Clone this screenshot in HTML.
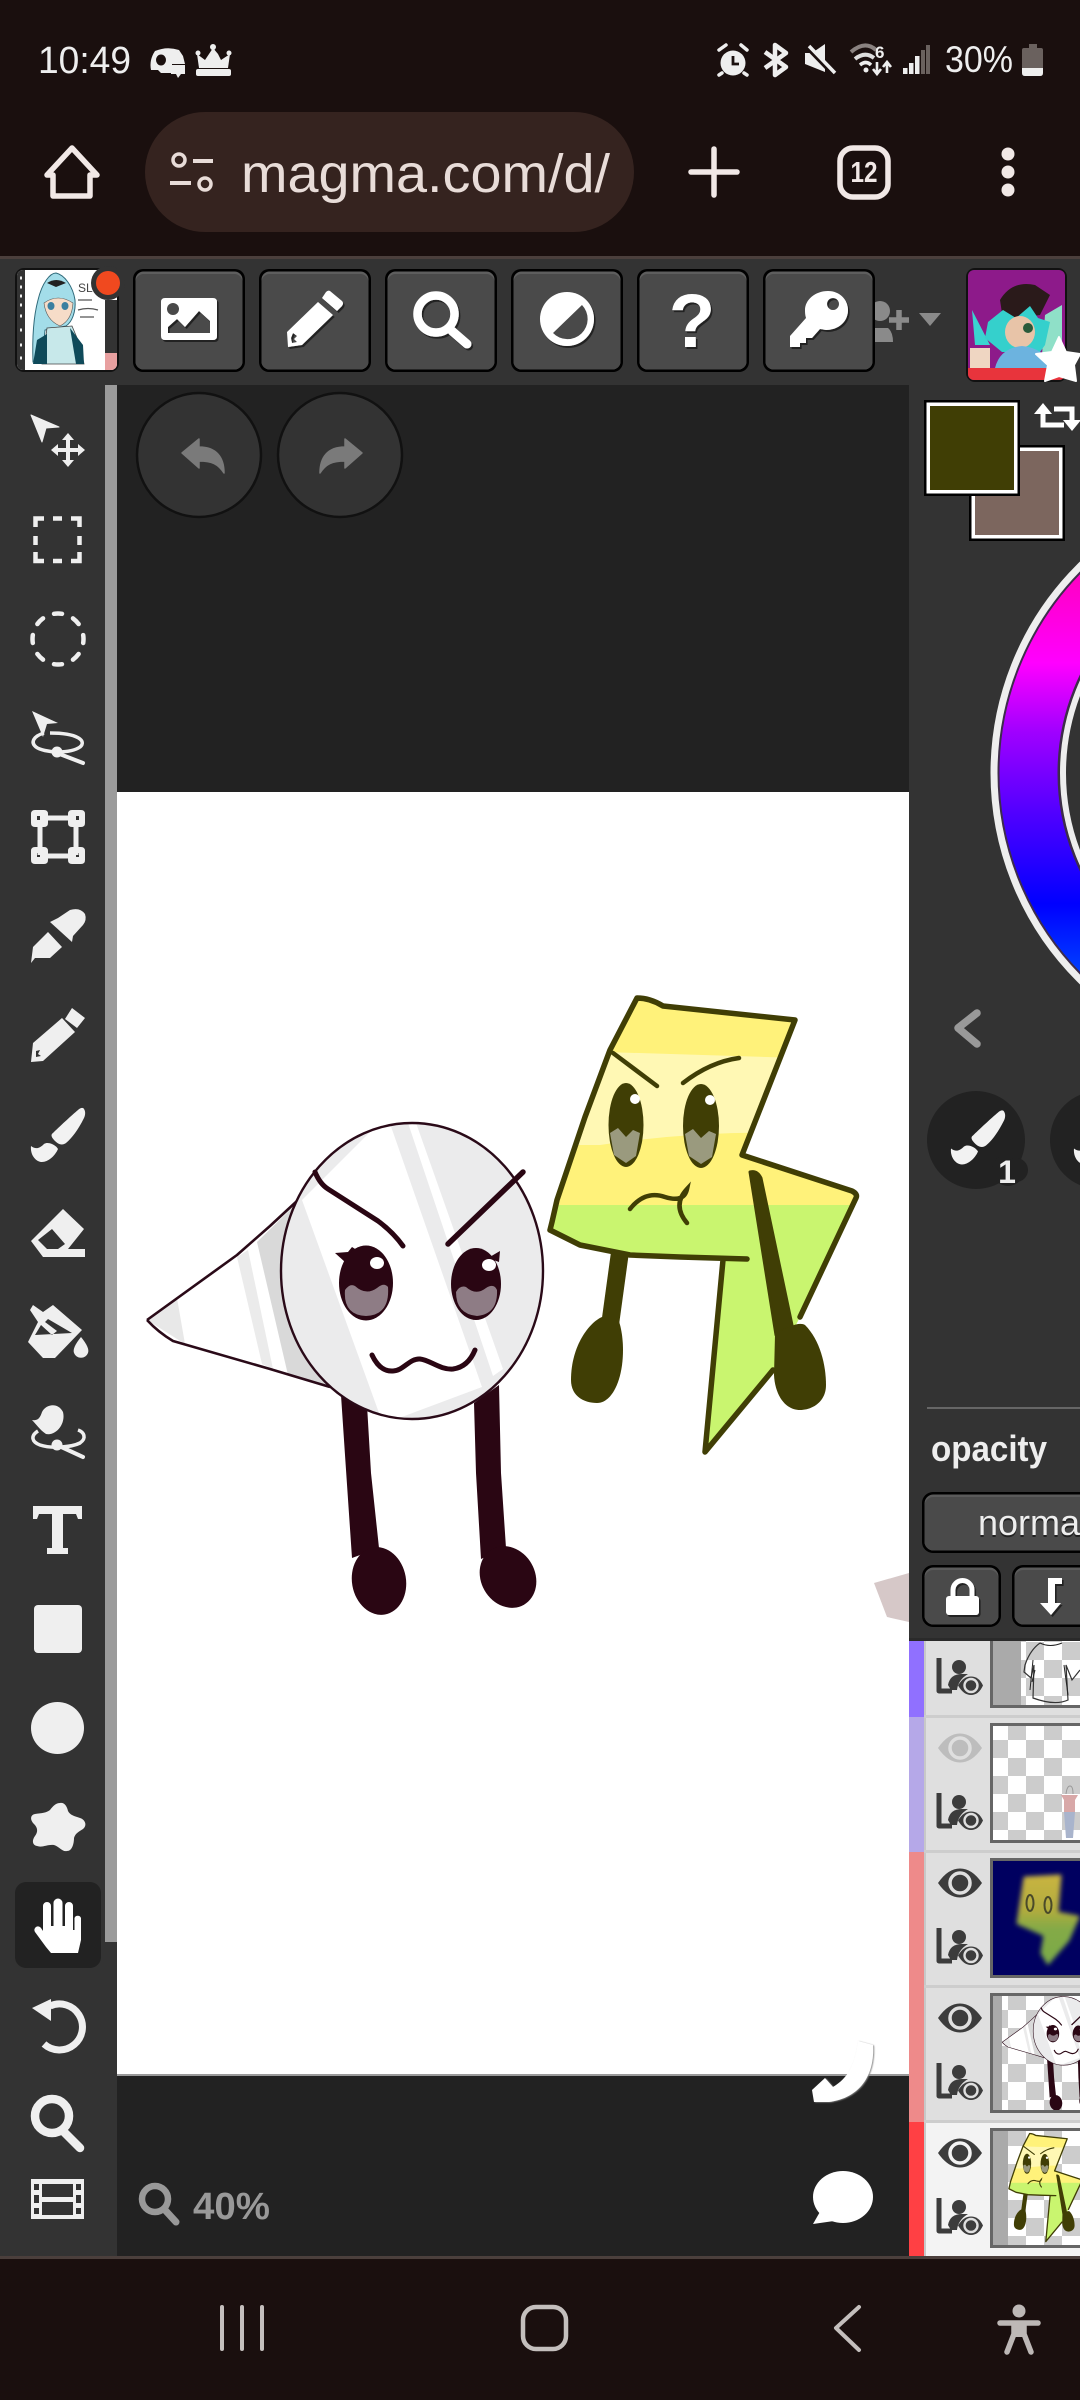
<!DOCTYPE html>
<html><head><meta charset="utf-8"><title>magma</title>
<style>html,body{margin:0;padding:0;background:#1a0f0e}svg{display:block}text{font-family:"Liberation Sans",sans-serif}</style></head>
<body>
<svg xmlns="http://www.w3.org/2000/svg" width="1080" height="2400" viewBox="0 0 1080 2400">
<defs>
<linearGradient id="hue" gradientUnits="userSpaceOnUse" x1="0" y1="560" x2="0" y2="990">
<stop offset="0" stop-color="#ff00b8"/><stop offset=".24" stop-color="#ff00ff"/><stop offset=".4" stop-color="#a000ff"/><stop offset=".59" stop-color="#5000ff"/><stop offset=".8" stop-color="#0000ff"/><stop offset="1" stop-color="#0050ff"/></linearGradient>
<linearGradient id="blobg" gradientUnits="userSpaceOnUse" x1="0" y1="1876" x2="0" y2="1963"><stop offset="0" stop-color="#c9b441"/><stop offset=".4" stop-color="#b0ab3e"/><stop offset=".6" stop-color="#84aa46"/><stop offset="1" stop-color="#7aaa48"/></linearGradient>
<pattern id="ck2" width="36" height="36" patternUnits="userSpaceOnUse" patternTransform="translate(1008 1722)"><rect width="36" height="36" fill="#fff"/><rect width="18" height="18" fill="#ccc"/><rect x="18" y="18" width="18" height="18" fill="#ccc"/></pattern>
<pattern id="ck1" width="36" height="36" patternUnits="userSpaceOnUse" patternTransform="translate(1044 1660)"><rect width="36" height="36" fill="#fff"/><rect width="18" height="18" fill="#ccc"/><rect x="18" y="18" width="18" height="18" fill="#ccc"/></pattern>
<pattern id="ck4" width="36" height="36" patternUnits="userSpaceOnUse" patternTransform="translate(1008 1992)"><rect width="36" height="36" fill="#fff"/><rect width="18" height="18" fill="#ccc"/><rect x="18" y="18" width="18" height="18" fill="#ccc"/></pattern>
<pattern id="ck5" width="36" height="36" patternUnits="userSpaceOnUse" patternTransform="translate(1008 2128)"><rect width="36" height="36" fill="#fff"/><rect width="18" height="18" fill="#ccc"/><rect x="18" y="18" width="18" height="18" fill="#ccc"/></pattern>
<clipPath id="headc"><ellipse cx="412" cy="1271" rx="131" ry="148"/></clipPath>
<clipPath id="conec"><path d="M147,1320 L237,1255 L270,1226 L297,1201 L330,1387 L270,1369 L173,1341Z"/></clipPath>
<clipPath id="yc"><path d="M637,998 L663,1006 L795,1020 L742,1155 L857,1193 L800,1317 L773,1370 L705,1452 L723,1258 L630,1255 L580,1245 L550,1230 L557,1200 L585,1117 L610,1050Z"/></clipPath>
<clipPath id="t1"><rect x="993" y="1641" width="87" height="64"/></clipPath>
<clipPath id="t2"><rect x="993" y="1726" width="87" height="114"/></clipPath>
<clipPath id="t3"><rect x="993" y="1861" width="87" height="114"/></clipPath>
<clipPath id="t4"><rect x="993" y="1996" width="87" height="114"/></clipPath>
<clipPath id="t5"><rect x="993" y="2131" width="87" height="114"/></clipPath>
<clipPath id="av"><rect x="968" y="270" width="97" height="110" rx="6"/></clipPath>
<clipPath id="tb"><rect x="17" y="270" width="100" height="100" rx="6"/></clipPath>
<filter id="sh" x="-10%" y="-10%" width="125%" height="125%"><feDropShadow dx="1.6" dy="2" stdDeviation=".3" flood-color="#222"/></filter>
<filter id="psh" x="-10%" y="-10%" width="125%" height="125%"><feDropShadow dx="1" dy="0.500" stdDeviation=".8" flood-color="#888"/></filter>
<filter id="bl" x="-20%" y="-20%" width="140%" height="140%"><feGaussianBlur stdDeviation="2.400"/></filter>

<g id="white">
 <path d="M341,1395 L367,1405 L371,1473 L379,1548 L352,1558 L345,1455Z" fill="#2a0613"/>
 <ellipse cx="379" cy="1581" rx="27" ry="34" transform="rotate(-10 379 1581)" fill="#2a0613"/>
 <path d="M474,1403 L499,1385 L501,1473 L506,1548 L481,1559 L476,1473Z" fill="#2a0613"/>
 <ellipse cx="508" cy="1577" rx="27" ry="32" transform="rotate(-30 508 1577)" fill="#2a0613"/>
 <path d="M147,1320 L237,1255 L270,1226 L297,1201 L330,1387 L270,1369 L173,1341Z" fill="#fff"/>
 <g clip-path="url(#conec)">
  <path d="M147,1320 L177,1298 L185,1344Z" fill="#e8e8e8"/>
  <path d="M237,1257 L248,1250 L273,1369 L262,1364Z" fill="#ebebeb"/>
  <path d="M257,1242 L297,1203 L330,1386 L288,1375Z" fill="#d9d9d9"/>
 </g>
 <path d="M147,1320 L237,1255 L270,1226 L297,1201 M147,1320 Q158,1332 173,1341 L270,1369 L330,1387" fill="none" stroke="#2a0a18" stroke-width="2.600" stroke-linejoin="round"/>
 <ellipse cx="412" cy="1271" rx="131" ry="148" fill="#ebebec"/>
 <g clip-path="url(#headc)">
  <path d="M302,1200 L387,1115 L482,1387 L383,1424Z" fill="#fff"/>
  <path d="M407,1120 L415,1120 L503,1369 L493,1376Z" fill="#fff"/>
 </g>
 <ellipse cx="412" cy="1271" rx="131" ry="148" fill="none" stroke="#2a0a18" stroke-width="2.400"/>
 <path d="M315,1172 Q320,1184 328,1189 L378,1221 Q393,1232 403,1246" fill="none" stroke="#2a0613" stroke-width="5" stroke-linecap="round"/>
 <path d="M523,1172 L448,1244" fill="none" stroke="#2a0613" stroke-width="5.500" stroke-linecap="round"/>
 <path d="M335,1253 L348,1252 L352,1247 L360,1252 L345,1262Z" fill="#2a0613"/>
 <ellipse cx="366" cy="1283" rx="27" ry="37.500" fill="#2a0613"/>
 <path d="M345,1290 Q350,1283 355,1286 Q366,1296 377,1288 Q384,1282 388,1287 Q390,1315 366,1316 Q343,1315 345,1290Z" fill="#8e7c85"/>
 <ellipse cx="377" cy="1263" rx="7" ry="6" fill="#fff"/>
 <path d="M500,1251 L499,1262 L488,1258Z" fill="#2a0613"/>
 <ellipse cx="476" cy="1284" rx="25" ry="36" fill="#2a0613"/>
 <path d="M456,1292 Q460,1285 466,1287 Q476,1296 486,1288 Q494,1283 497,1290 Q498,1314 477,1316 Q456,1314 456,1292Z" fill="#8e7c85"/>
 <ellipse cx="489" cy="1265" rx="7" ry="6" fill="#fff"/>
 <path d="M372,1355 Q380,1372 393,1371 C403,1371 410,1358 420,1359 C430,1360 440,1370 453,1369 Q468,1367 475,1350" fill="none" stroke="#2a0613" stroke-width="5" stroke-linecap="round"/>
</g>

<g id="yellow">
 <path d="M611,1252 L629,1252 L619,1325 L601,1325Z" fill="#403e05"/>
 <path d="M602,1317 C590,1322 571,1345 571,1380 C571,1397 585,1403 597,1403 C612,1403 623,1380 623,1350 C623,1335 620,1322 617,1317Z" fill="#403e05"/>
 <path d="M637,998 L663,1006 L795,1020 L742,1155 L857,1193 L800,1317 L773,1370 L705,1452 L723,1258 L630,1255 L580,1245 L550,1230 L557,1200 L585,1117 L610,1050Z" fill="#c9f56f"/>
 <g clip-path="url(#yc)">
  <rect x="540" y="990" width="330" height="215" fill="#fff27a"/>
  <path d="M540,1050 L800,1058 L800,1133 Q700,1130 600,1145 L540,1145Z" fill="#fff8b4"/>
 </g>
 <path d="M747,1259 L680,1257 L630,1255 L580,1245 L550,1230 L552,1222 L557,1200 L585,1117 L610,1050 L637,998 Q650,998 663,1006 L795,1020 L742,1155 L852,1191 Q858,1194 856,1198 L800,1317 M773,1370 L705,1452 L723,1260" fill="none" stroke="#403e05" stroke-width="5.500" stroke-linejoin="round" stroke-linecap="round"/>
 <ellipse cx="626" cy="1125" rx="17.500" ry="42" fill="#403e05"/>
 <path d="M610,1133 L618,1128 L626,1137 L633,1130 L640,1133 L636,1156 L626,1163 L614,1155Z" fill="#9a9a7e"/>
 <circle cx="635" cy="1099" r="5" fill="#fff"/>
 <ellipse cx="701" cy="1126" rx="18" ry="42" fill="#403e05"/>
 <path d="M685,1134 L693,1129 L701,1138 L709,1131 L716,1134 L712,1157 L701,1164 L689,1156Z" fill="#9a9a7e"/>
 <circle cx="710" cy="1100" r="5" fill="#fff"/>
 <path d="M613,1053 L657,1086 M683,1083 Q710,1062 739,1058" fill="none" stroke="#403e05" stroke-width="4.500" stroke-linecap="round"/>
 <path d="M630,1209 Q645,1190 665,1197 Q684,1203 687,1189 Q672,1205 687,1223" fill="none" stroke="#403e05" stroke-width="4.500" stroke-linecap="round"/>
 <path d="M750,1172 Q757,1170 761,1178 L792,1325 L776,1335Z" fill="#403e05" stroke="#403e05" stroke-width="3" stroke-linejoin="round"/>
 <path d="M775,1335 C790,1325 800,1322 805,1325 C820,1340 826,1365 826,1385 C826,1402 812,1410 800,1410 C785,1410 775,1395 774,1375Z" fill="#403e05"/>
</g>

<g id="merge">
 <path d="M939,1658 V1691 H952" fill="none" stroke="#3c3c3c" stroke-width="5" stroke-linejoin="round"/>
 <circle cx="959" cy="1667" r="7" fill="#3c3c3c"/>
 <path d="M948,1685 Q950,1674 962,1674 L968,1674 Q958,1680 957,1690 L951,1690Z" fill="#3c3c3c"/>
 <path d="M958,1685.500 C962,1679 966,1676.500 971,1676.500 C976,1676.500 980,1679 983,1685.500 C980,1692 976,1695 971,1695 C966,1695 962,1692 958,1685.500Z" fill="#3c3c3c"/>
 <circle cx="971" cy="1685.500" r="6.500" fill="none" stroke="#dfdfdf" stroke-width="2.400"/>
</g>
<path id="eyeshape" d="M0,0" fill="none"/>
<g id="brush" fill="#f2f2f2">
 <path d="M84,1109 C86,1112 85,1116 84,1118 C78,1130 72,1138 66,1143 C62,1146 58,1144 55,1141 C52,1138 50,1135 53,1133 C58,1128 72,1115 78,1110 C80,1108 83,1107 84,1109Z"/>
 <path d="M31,1146 C36,1150 40,1148 44,1144 C48,1141 56,1145 58,1149 C55,1156 48,1162 42,1162 C36,1162 30,1155 31,1146Z"/>
</g>
</defs>

<rect width="1080" height="2400" fill="#1a0f0e"/>

<!-- status bar -->
<text x="38" y="73" font-size="38" fill="#eee" textLength="93" lengthAdjust="spacingAndGlyphs">10:49</text>
<path d="M155,51 Q167,46 179,50 L183,56 L185,64 H172 V73 H166 L161,73 L158,70 L151,70 Q149,60 155,51Z" fill="#eee"/>
<ellipse cx="161" cy="60" rx="5" ry="5.500" fill="#1a0f0e"/>
<path d="M171,65 H185 V74 H181 L178,78 L176,74 H171Z" fill="#eee"/>
<path d="M197,54 L205,60 L209,54 L213,48 L218,54 L221,60 L230,54 L228,68 H199Z" fill="#eee"/>
<circle cx="213" cy="47" r="3" fill="#eee"/><circle cx="198" cy="53" r="2.500" fill="#eee"/><circle cx="229" cy="53" r="2.500" fill="#eee"/>
<rect x="196" y="69" width="35" height="7" rx="2" fill="#eee"/>
<text x="945" y="72" font-size="37" fill="#eee" textLength="68" lengthAdjust="spacingAndGlyphs">30%</text>
<g fill="#eee" stroke="none">
 <circle cx="733" cy="63" r="12.500"/>
 <path d="M719,50 L726,45 M741,45 L747,50" stroke="#eee" stroke-width="3.500" fill="none" stroke-linecap="round"/>
 <path d="M722,73 L719,75 M744,73 L747,75" stroke="#eee" stroke-width="3.500" fill="none" stroke-linecap="round"/>
 <path d="M733,56 V64 H739" stroke="#1a0f0e" stroke-width="2.800" fill="none"/>
</g>
<path d="M765,52 L786,67 L775,75 V45 L786,53 L765,68" fill="none" stroke="#eee" stroke-width="4.500" stroke-linejoin="round"/>
<path d="M805,53 H812 L825,44 V72 L805,64Z" fill="#eee"/>
<path d="M805,45 L833,74" stroke="#1a0f0e" stroke-width="4.500"/><path d="M809,46 L835,73" stroke="#eee" stroke-width="3.500"/>
<path d="M851,52 Q865,40 876,50" fill="none" stroke="#8a8280" stroke-width="4"/>
<path d="M855,59 Q865,51 874,58" fill="none" stroke="#ddd" stroke-width="4"/>
<path d="M860,65 Q866,60 871,65" fill="none" stroke="#eee" stroke-width="3.500"/>
<circle cx="866" cy="70" r="2.500" fill="#eee"/>
<text x="875" y="58" font-size="17" fill="#eee" font-weight="bold">6</text>
<path d="M877,62 V73 M873,69 L877,74 L881,69 M887,73 V63 M883,67 L887,62 L891,67" fill="none" stroke="#eee" stroke-width="2.600"/>
<g fill="#eee"><rect x="903" y="68" width="4.500" height="6"/><rect x="909" y="63" width="4.500" height="11"/><rect x="915" y="56" width="4.500" height="18"/></g>
<g fill="#6a615e"><rect x="921" y="50" width="4" height="24"/><rect x="926" y="45" width="4" height="29"/></g>
<path d="M1029,44 H1037 V48 H1041 Q1043,48 1043,50 V68 H1022 V50 Q1022,48 1024,48 H1029Z" fill="#6a615e"/>
<path d="M1022,68 H1043 V73 Q1043,76 1040,76 H1025 Q1022,76 1022,73Z" fill="#eee"/>

<!-- browser bar -->
<path d="M72,148 L97,175 H90 V196 H53 V175 H47Z" fill="none" stroke="#f1e8e6" stroke-width="5.500" stroke-linejoin="round"/>
<rect x="145" y="112" width="489" height="120" rx="60" fill="#35231f"/>
<circle cx="179" cy="160" r="6" fill="none" stroke="#e8dcd8" stroke-width="3.500"/>
<path d="M193,161 H213 M170,183 H191" stroke="#e8dcd8" stroke-width="4"/>
<circle cx="205" cy="184" r="6" fill="none" stroke="#e8dcd8" stroke-width="3.500"/>
<text x="241" y="192" font-size="54" fill="#e8dcd8" textLength="369" lengthAdjust="spacingAndGlyphs">magma.com/d/</text>
<path d="M714,149 V195 M691,172 H737" stroke="#f1e8e6" stroke-width="5.500" stroke-linecap="round"/>
<rect x="840" y="148" width="48" height="49" rx="13" fill="none" stroke="#f1e8e6" stroke-width="5.500"/>
<text x="864" y="182" font-size="29" font-weight="bold" fill="#f1e8e6" text-anchor="middle" textLength="27" lengthAdjust="spacingAndGlyphs">12</text>
<g fill="#f1e8e6"><circle cx="1008" cy="154" r="6.500"/><circle cx="1008" cy="172" r="6.500"/><circle cx="1008" cy="190" r="6.500"/></g>

<!-- app bg -->
<rect x="0" y="256" width="1080" height="3" fill="#4b3f3c"/>
<rect x="0" y="259" width="1080" height="1997" fill="#333"/>
<rect x="117" y="385" width="792" height="1871" fill="#222"/>
<rect x="117" y="792" width="792" height="1283" fill="#fff"/>
<rect x="117" y="2074" width="792" height="2" fill="#999"/>
<rect x="105" y="385" width="12" height="1557" fill="#9b9b9b"/>
<rect x="0" y="2256" width="1080" height="3" fill="#4b3f3c"/>

<!-- art -->
<path d="M874,1583 L909,1573 V1622 L887,1617Z" fill="#d6c8c8"/>
<use href="#white"/>
<use href="#yellow"/>

<!-- person add behind toolbar -->
<circle cx="880" cy="311" r="10" fill="#8a8a8a"/>
<path d="M872,328 H888 Q893,332 893,342 H872Z" fill="#8a8a8a"/>
<path d="M899,310 V330 M889,320 H909" stroke="#8a8a8a" stroke-width="5.500"/>
<path d="M919,313 H941 L930,326Z" fill="#8a8a8a"/>

<!-- top toolbar -->
<g>
 <rect x="133" y="269" width="112" height="103" rx="10" fill="#000"/><rect x="135.500" y="271.500" width="107" height="98" rx="8" fill="#5e5e5e"/><rect x="135.500" y="274" width="107" height="95.500" rx="8" fill="#4a4a4a"/>
 <rect x="259" y="269" width="112" height="103" rx="10" fill="#000"/><rect x="261.500" y="271.500" width="107" height="98" rx="8" fill="#5e5e5e"/><rect x="261.500" y="274" width="107" height="95.500" rx="8" fill="#4a4a4a"/>
 <rect x="385" y="269" width="112" height="103" rx="10" fill="#000"/><rect x="387.500" y="271.500" width="107" height="98" rx="8" fill="#5e5e5e"/><rect x="387.500" y="274" width="107" height="95.500" rx="8" fill="#4a4a4a"/>
 <rect x="511" y="269" width="112" height="103" rx="10" fill="#000"/><rect x="513.500" y="271.500" width="107" height="98" rx="8" fill="#5e5e5e"/><rect x="513.500" y="274" width="107" height="95.500" rx="8" fill="#4a4a4a"/>
 <rect x="637" y="269" width="112" height="103" rx="10" fill="#000"/><rect x="639.500" y="271.500" width="107" height="98" rx="8" fill="#5e5e5e"/><rect x="639.500" y="274" width="107" height="95.500" rx="8" fill="#4a4a4a"/>
 <rect x="763" y="269" width="112" height="103" rx="10" fill="#000"/><rect x="765.500" y="271.500" width="107" height="98" rx="8" fill="#5e5e5e"/><rect x="765.500" y="274" width="107" height="95.500" rx="8" fill="#4a4a4a"/>
 <g filter="url(#sh)">
  <path fill-rule="evenodd" fill="#fff" d="M165,298 H213 Q217,298 217,302 V336 Q217,340 213,340 H165 Q161,340 161,336 V302 Q161,298 165,298Z M168,333 H210 V321 L199,311 L185,327 L177,319 L168,327Z"/>
  <circle cx="173" cy="309" r="6" fill="#4a4a4a"/>
  <path fill="#fff" d="M330,291 L342,301 Q344,303 342,306 L337,311 L322,298 L326,292 Q328,290 330,291Z"/>
  <path fill="#fff" fill-rule="evenodd" d="M318,302 L333,315 L302,345 L288,347 L287,332Z M291,338 L292,343 L297,342 L294,339 L297,336 L293,333Z"/>
  <path d="M452,331 L467,344" stroke="#fff" stroke-width="9" stroke-linecap="round"/>
  <circle cx="436" cy="314" r="18.500" fill="none" stroke="#fff" stroke-width="8.500"/>
  <circle cx="567" cy="319" r="27" fill="#fff"/>
  <path d="M553,333 L582,305 A20,20 0 0 1 553,333Z" fill="#4a4a4a"/>
  <text x="692" y="347" font-size="76" font-weight="bold" fill="#fff" text-anchor="middle">?</text>
  <path fill="#fff" fill-rule="evenodd" d="M828,291 C840,291 848,300 848,310 C848,322 838,330 826,330 L820,329 L812,338 H806 V343 H800 V347 H790 V336 L806,318 C805,315 805,312 805,310 C805,300 815,291 828,291Z M833,298 a6,6 0 1 0 .01,0Z"/>
 </g>
</g>

<!-- doc thumb -->
<rect x="15" y="268" width="104" height="104" rx="9" fill="#111"/>
<g clip-path="url(#tb)">
 <rect x="17" y="270" width="100" height="100" fill="#fff"/>
 <rect x="17" y="270" width="8" height="100" fill="#333"/>
 <path d="M20,278 h2 M20,287 h2 M20,296 h2 M20,305 h2 M20,316 h2 M20,330 h2 M20,345 h2 M20,358 h2" stroke="#eee" stroke-width="3"/>
 <rect x="105" y="300" width="14" height="55" fill="#333"/>
 <path d="M105,353 h14 v18 h-14Z" fill="#e8a0a0"/>
 <path d="M33,362 C32,335 34,315 38,300 C42,283 50,273 56,273 C65,275 73,287 75,300 C76,312 72,322 66,326 L45,330 L42,362Z" fill="#a3dde9" stroke="#2f6a7a" stroke-width="1"/>
 <path d="M44,303 Q58,293 73,303 Q72,320 60,326 Q46,320 44,303Z" fill="#f6dcc8" stroke="#555" stroke-width=".6"/>
 <path d="M47,328 L72,326 L80,345 L84,364 L42,364Z" fill="#c7e8ea" stroke="#444" stroke-width=".8"/>
 <path d="M37,340 L47,334 L47,364 L33,364Z M70,328 L83,345 L84,364 L76,364 Z" fill="#0f4a5a"/>
 <ellipse cx="51" cy="306" rx="3.500" ry="4" fill="#3b7fa0"/><ellipse cx="65" cy="306" rx="3.500" ry="4" fill="#3b7fa0"/>
 <path d="M47,283 Q56,277 66,283 L56,287Z" fill="#222"/>
 <text x="78" y="292" font-size="12" fill="#444">SL</text>
 <path d="M78,300 h14 M78,310 q10,-3 20,0 M80,317 h14" stroke="#555" stroke-width="1.200" fill="none"/>
</g>
<circle cx="108" cy="283" r="17" fill="#333"/>
<circle cx="108" cy="283" r="12" fill="#f0491f"/>

<!-- avatar -->
<rect x="966" y="268" width="101" height="114" rx="9" fill="#111"/>
<g clip-path="url(#av)">
 <rect x="968" y="270" width="97" height="110" fill="#8d1a8a"/>
 <path d="M1000,300 Q1012,280 1035,285 L1050,295 L1040,315 L1003,320Z" fill="#2a1a1a"/>
 <path d="M972,310 L990,345 L975,345Z" fill="#3ad4d0"/>
 <path d="M1045,315 L1062,305 L1062,365 L1042,355Z" fill="#8fe0c8"/>
 <path d="M988,322 L1003,310 L1016,318 L1030,306 L1038,318 L1050,322 L1045,345 L1040,352 L1002,352 L985,338Z" fill="#35d0cc"/>
 <ellipse cx="1020" cy="332" rx="15" ry="16" fill="#e8c4a8"/>
 <circle cx="1028" cy="328" r="5" fill="#2a5a3a"/>
 <path d="M995,368 Q1000,348 1022,346 Q1045,348 1052,368Z" fill="#6cb3df"/>
 <path d="M970,348 h20 v20 h-20Z" fill="#efd6c2"/>
 <rect x="968" y="368" width="97" height="12" fill="#e8343c"/>
</g>
<path d="M1059,337 L1066,352 L1080,354 L1074,365 L1076,381 L1059,376 L1045,381 L1048,365 L1036,354 L1052,352Z" fill="#fff" stroke="#fff" stroke-width="2" stroke-linejoin="round"/>

<!-- undo/redo -->
<circle cx="199" cy="455" r="62" fill="#333" stroke="#111" stroke-width="2.500"/>
<circle cx="340" cy="455" r="62" fill="#333" stroke="#111" stroke-width="2.500"/>
<path d="M182,453 L199,439 V447 C216,447 224,457 224,473 C218,464 212,461 199,461 V468Z" fill="#7a7a7a" stroke="#7a7a7a" stroke-width="1.500" stroke-linejoin="round"/>
<path d="M362,453 L345,439 V447 C328,447 320,457 320,473 C326,464 332,461 345,461 V468Z" fill="#7a7a7a" stroke="#7a7a7a" stroke-width="1.500" stroke-linejoin="round"/>

<!-- left tools -->
<g fill="#efefef">
 <path d="M31,415 L59,427 L46,428 L42,442Z" stroke="#efefef" stroke-width="1" stroke-linejoin="round"/>
 <path d="M68,433 l6,7 h-4 v8 h8 v-4 l7,6 -7,6 v-4 h-8 v8 h4 l-6,7 -6,-7 h4 v-8 h-8 v4 l-7,-6 7,-6 v4 h8 v-8 h-4z"/>
 <g fill="none" stroke="#efefef" stroke-width="4.500">
  <path d="M35.500,527 V518.500 H44 M71,518.500 H79.500 V527 M79.500,552 V561 H71 M44,561 H35.500 V552 M53,518.500 H62 M53,561 H62 M35.500,536 V545 M79.500,536 V545"/>
  <circle cx="58" cy="639" r="25.500" stroke-dasharray="8 12" stroke-dashoffset="4" stroke-linecap="round" stroke-width="4.500"/>
  <path d="M44,733 C34,736 30,742 36,747 C44,753 70,754 80,747 C87,741 78,733 50,733" stroke-width="3.500"/>
  <path d="M57,753 L83,763" stroke-width="4" stroke-linecap="round"/>
  <path d="M40,820 V855 M76,820 V855 M40,818 H76 M40,856 H76" stroke-width="5"/>
 </g>
 <path d="M32,711 L58,723 L47,724 L43,737Z"/>
 <circle cx="57" cy="752" r="5.500"/>
 <path fill-rule="evenodd" d="M35,810 h9 q4,0 4,4 v9 q0,4 -4,4 h-9 q-4,0 -4,-4 v-9 q0,-4 4,-4Z M37,816 v4 h5 v-4Z"/>
 <path fill-rule="evenodd" d="M72,810 h9 q4,0 4,4 v9 q0,4 -4,4 h-9 q-4,0 -4,-4 v-9 q0,-4 4,-4Z M74,816 v4 h5 v-4Z"/>
 <path fill-rule="evenodd" d="M35,847 h9 q4,0 4,4 v9 q0,4 -4,4 h-9 q-4,0 -4,-4 v-9 q0,-4 4,-4Z M37,853 v4 h5 v-4Z"/>
 <path fill-rule="evenodd" d="M72,847 h9 q4,0 4,4 v9 q0,4 -4,4 h-9 q-4,0 -4,-4 v-9 q0,-4 4,-4Z M74,853 v4 h5 v-4Z"/>
 <path d="M50,922 L58,918 L70,910 Q80,907 85,914 Q87,920 83,925 L73,936 L72,942Z"/>
 <path d="M48,932 L62,947 L50,958 L35,958 L31,963 L33,947Z"/>
 <path d="M72,1008 L85,1018 L77,1028 L65,1019Z"/>
 <path fill-rule="evenodd" d="M62,1018 L75,1032 L43,1061 L31,1062 L33,1043Z M36,1051 L36,1057 L41,1056 L38,1054 L40,1050Z"/>
 <use href="#brush"/>
 <path fill-rule="evenodd" d="M63,1209 L84,1229 L68,1249 H85 V1257 H43 L31,1241Z M52,1229 L38,1240 L47,1249 H58 L65,1244Z"/>
 <path fill-rule="evenodd" d="M33,1305 L43,1312 L53,1305 L82,1330 L55,1358 H43 L28,1342 L38,1322 L30,1310Z M35,1335 L72,1333 L48,1319 L45,1322 L57,1331 L52,1335 L41,1325Z"/>
 <path d="M81,1337 Q90,1348 88,1353 A7.500,7.500 0 0 1 74,1353 Q72,1348 81,1337Z"/>
 <path d="M32,1420 C38,1421 40,1418 42,1412 C46,1404 58,1402 63,1412 C66,1424 56,1436 46,1434 C40,1430 36,1424 32,1420Z"/>
 <g fill="none" stroke="#efefef" stroke-width="3.500"><path d="M38,1431 C30,1436 32,1442 40,1445 C52,1449 72,1447 80,1443 C87,1438 84,1432 78,1430"/><path d="M57,1445 L83,1457" stroke-width="4" stroke-linecap="round"/></g>
 <circle cx="57" cy="1445" r="5.500"/>
 <path d="M33,1506 H82 V1519 H78 L76,1514 H63 V1548 H68 V1554 H47 V1548 H52 V1514 H39 L37,1519 H33Z"/>
 <rect x="34" y="1605" width="48" height="48" rx="4"/>
 <ellipse cx="57.500" cy="1728" rx="26.500" ry="26"/>
 <path d="M60,1803 C64,1802 67,1806 68,1811 C70,1815 74,1816 80,1818 C86,1820 87,1826 83,1829 C78,1832 75,1834 74,1838 C74,1844 72,1851 67,1851 C62,1852 60,1847 54,1845 C48,1844 42,1848 37,1846 C32,1845 32,1840 35,1836 C38,1832 38,1828 34,1824 C30,1820 30,1815 35,1814 C42,1813 46,1813 50,1810 C53,1806 56,1803 60,1803Z"/>
</g>
<rect x="15" y="1882" width="86" height="86" rx="11" fill="#222"/>
<path fill="#fff" d="M43,1930 V1906 a4,4 0 0 1 8,0 V1926 H53.500 V1903 a4.500,4.500 0 0 1 9,0 V1926 H65 V1906 a4,4 0 0 1 8,0 V1930 H74.500 V1918 a3.500,3.500 0 0 1 6.500,0 V1940 L78,1953 H51 L46,1947 L35,1932 a3.500,3.500 0 0 1 6,-4 L43,1931Z"/>
<g fill="none" stroke="#efefef">
 <path d="M50,2006 A23,23 0 1 1 44,2044" stroke-width="7"/>
 <circle cx="52" cy="2116" r="17" stroke-width="8.500"/>
 <path d="M64,2132 L80,2148" stroke-width="8.500" stroke-linecap="round"/>
</g>
<path d="M32,2008 L51,1999 L51,2021Z" fill="#efefef"/>
<path fill="#efefef" fill-rule="evenodd" d="M31,2179 H84 V2219 H31Z M42,2184 V2197 H73 V2184Z M42,2202 V2215 H73 V2202Z M34,2184 V2190 H39 V2184Z M34,2195 V2203 H39 V2195Z M34,2208 V2214 H39 V2208Z M76,2184 V2190 H81 V2184Z M76,2195 V2203 H81 V2195Z M76,2208 V2214 H81 V2208Z"/>

<!-- zoom label -->
<circle cx="155" cy="2199" r="13" fill="none" stroke="#999" stroke-width="6.500"/>
<path d="M165,2210 L176,2222" stroke="#999" stroke-width="7" stroke-linecap="round"/>
<text x="193" y="2219" font-size="38" font-weight="bold" fill="#999" textLength="77" lengthAdjust="spacingAndGlyphs">40%</text>

<!-- phone, chat -->
<path filter="url(#psh)" d="M858,2041 L873,2045 C875,2075 860,2098 829,2102 L814,2102 L812,2090 L825,2078 L833,2087 C848,2078 855,2065 858,2041Z" fill="#fff"/>
<ellipse cx="843" cy="2197" rx="30" ry="26" fill="#fff"/>
<path d="M821,2210 L813,2224 L834,2221Z" fill="#fff"/>

<!-- right panel: colors -->
<rect x="969" y="445" width="96" height="96" fill="#000"/><rect x="971.500" y="447.500" width="91" height="91" fill="#fff"/><rect x="975" y="451" width="84" height="84" fill="#7c665e"/>
<rect x="924" y="400" width="96" height="96" fill="#000"/><rect x="926.500" y="402.500" width="91" height="91" fill="#fff"/><rect x="930" y="406" width="84" height="84" fill="#403e05"/>
<path d="M1043,410 V425 H1064 M1054,409 H1072 V424" fill="none" stroke="#fff" stroke-width="5"/>
<path d="M1034,414 L1043,403 L1052,414Z M1063,420 L1072,431 L1081,420Z" fill="#fff"/>
<circle cx="1285" cy="773" r="256.500" fill="none" stroke="url(#hue)" stroke-width="59"/>
<circle cx="1285" cy="773" r="286.500" fill="none" stroke="#3e2c4c" stroke-width="2"/>
<circle cx="1285" cy="773" r="226.500" fill="none" stroke="#3e2c4c" stroke-width="2"/>
<circle cx="1285" cy="773" r="291" fill="none" stroke="#eee" stroke-width="7"/>
<circle cx="1285" cy="773" r="222" fill="none" stroke="#eee" stroke-width="6"/>
<path d="M977,1013 L958,1028 L977,1044" fill="none" stroke="#999" stroke-width="7.500" stroke-linejoin="round" stroke-linecap="round"/>
<circle cx="976" cy="1140" r="49" fill="#222"/>
<circle cx="1099" cy="1140" r="49" fill="#222"/>
<use href="#brush" transform="translate(920 2.500)"/>
<use href="#brush" transform="translate(1043 2.500)"/>
<circle cx="1008" cy="1170" r="16" fill="#222"/><circle cx="1016" cy="1170" r="12" fill="#222"/>
<text x="1007" y="1183" font-size="32" fill="#eee" text-anchor="middle" font-weight="bold">1</text>

<!-- opacity -->
<rect x="927" y="1407" width="153" height="2" fill="#666"/>
<text x="931" y="1461" font-size="36" fill="#eee" font-weight="bold" textLength="116" lengthAdjust="spacingAndGlyphs">opacity</text>
<rect x="922" y="1492" width="170" height="61" rx="11" fill="#000"/><rect x="924.500" y="1494.500" width="165" height="56" rx="9" fill="#5a5a5a"/><rect x="924.500" y="1497" width="165" height="53.500" rx="9" fill="#4a4a4a"/>
<text x="978" y="1537" font-size="36" fill="#222">normal</text>
<text x="978" y="1535" font-size="36" fill="#eee">normal</text>
<rect x="922" y="1565" width="79" height="62" rx="11" fill="#000"/><rect x="924.500" y="1567.500" width="74" height="57" rx="9" fill="#5a5a5a"/><rect x="924.500" y="1570" width="74" height="54.500" rx="9" fill="#4a4a4a"/>
<rect x="1012" y="1565" width="100" height="62" rx="11" fill="#000"/><rect x="1014.500" y="1567.500" width="95" height="57" rx="9" fill="#5a5a5a"/><rect x="1014.500" y="1570" width="95" height="54.500" rx="9" fill="#4a4a4a"/>
<g filter="url(#sh)">
 <path d="M953,1597 V1590 a9.500,9.500 0 0 1 19,0 V1597" fill="none" stroke="#fff" stroke-width="5"/>
 <rect x="946" y="1596" width="33" height="19" rx="3" fill="#fff"/>
 <path d="M1048,1578 H1062 V1584 H1055 V1603 H1061 L1051,1615 L1040,1603 H1048Z" fill="#fff"/>
</g>

<!-- layers -->
<rect x="924" y="1641" width="156" height="615" fill="#dfdfdf"/>
<rect x="909" y="1641" width="15" height="76" fill="#9070ff"/>
<rect x="909" y="1717" width="15" height="135" fill="#b5a8e8"/>
<rect x="909" y="1852" width="15" height="270" fill="#ee8a8a"/>
<rect x="909" y="2122" width="15" height="134" fill="#ff4044"/>
<rect x="924" y="1641" width="2" height="615" fill="#c8c8c8"/>
<rect x="926" y="2122" width="154" height="134" fill="#f3f3f3"/>
<rect x="924" y="1715" width="156" height="3" fill="#cdcdcd"/>
<rect x="924" y="1850" width="156" height="3" fill="#cdcdcd"/>
<rect x="924" y="1985" width="156" height="3" fill="#cdcdcd"/>
<rect x="924" y="2120" width="156" height="3" fill="#cdcdcd"/>
<rect x="909" y="1638" width="171" height="3" fill="#2a2a2a"/>

<!-- thumb 1 -->
<rect x="990" y="1641" width="90" height="67" fill="#666"/>
<g clip-path="url(#t1)">
 <rect x="993" y="1641" width="87" height="64" fill="#aaa"/>
 <rect x="1021" y="1641" width="59" height="64" fill="url(#ck1)"/>
 <path d="M1040,1643 Q1030,1650 1025,1665 L1024,1672 L1031,1678 L1034,1665 L1033,1698 Q1055,1706 1068,1700 L1066,1665 L1072,1680 L1080,1670" fill="none" stroke="#333" stroke-width="1.200"/>
 <path d="M1040,1643 Q1050,1648 1062,1643 M1033,1660 L1030,1690 M1064,1665 L1068,1695 M1035,1670 L1032,1682" fill="none" stroke="#222" stroke-width="1"/>
</g>
<!-- thumb 2 -->
<rect x="990" y="1723" width="90" height="120" fill="#666"/>
<g clip-path="url(#t2)">
 <rect x="993" y="1726" width="87" height="114" fill="url(#ck2)"/>
 <path d="M1061,1795 H1078 L1075,1800 V1812 H1064 V1800Z" fill="#d8a8a8"/>
 <path d="M1064,1812 H1075 L1073,1838 H1066Z" fill="#a9b4cc"/>
 <path d="M1066,1794 Q1067,1786 1070,1786 Q1073,1786 1073,1794" fill="none" stroke="#999" stroke-width="1"/>
</g>
<!-- thumb 3 -->
<rect x="990" y="1858" width="90" height="120" fill="#666"/>
<g clip-path="url(#t3)">
 <rect x="993" y="1861" width="87" height="114" fill="#000060"/>
 <path filter="url(#bl)" d="M1025,1878 L1060,1876 L1057,1913 L1078,1917 L1068,1940 L1048,1963 L1042,1953 L1045,1935 L1018,1923Z" fill="url(#blobg)" stroke="url(#blobg)" stroke-width="3" stroke-linejoin="round"/>
 <ellipse cx="1030" cy="1903" rx="3.500" ry="8" fill="none" stroke="#4a4a2a" stroke-width="2"/>
 <ellipse cx="1048" cy="1905" rx="3.500" ry="8" fill="none" stroke="#4a4a2a" stroke-width="2"/>
</g>
<!-- thumb 4 -->
<rect x="990" y="1993" width="90" height="120" fill="#666"/>
<g clip-path="url(#t4)">
 <rect x="993" y="1996" width="9" height="114" fill="#aaa"/>
 <rect x="1002" y="1996" width="78" height="114" fill="url(#ck4)"/>
 <g transform="translate(968 1736) scale(.232)"><use href="#white"/></g>
</g>
<!-- thumb 5 -->
<rect x="990" y="2128" width="90" height="120" fill="#666"/>
<g clip-path="url(#t5)">
 <rect x="993" y="2131" width="15" height="114" fill="#aaa"/>
 <rect x="1008" y="2131" width="72" height="114" fill="url(#ck5)"/>
 <g transform="translate(878 1896) scale(.238)"><use href="#yellow"/></g>
</g>

<!-- eyes -->
<path d="M938,1748 C945,1738 952,1733.500 960,1733.500 C968,1733.500 975,1738 982,1748 C975,1758 968,1762.500 960,1762.500 C952,1762.500 945,1758 938,1748Z" fill="#bdbdbd"/>
<circle cx="960" cy="1748" r="10" fill="none" stroke="#dfdfdf" stroke-width="3.500"/>
<path d="M938,1883 C945,1873 952,1868.500 960,1868.500 C968,1868.500 975,1873 982,1883 C975,1893 968,1897.500 960,1897.500 C952,1897.500 945,1893 938,1883Z" fill="#3c3c3c"/>
<circle cx="960" cy="1883" r="10" fill="none" stroke="#dfdfdf" stroke-width="3.500"/>
<path d="M938,2018 C945,2008 952,2003.500 960,2003.500 C968,2003.500 975,2008 982,2018 C975,2028 968,2032.500 960,2032.500 C952,2032.500 945,2028 938,2018Z" fill="#3c3c3c"/>
<circle cx="960" cy="2018" r="10" fill="none" stroke="#dfdfdf" stroke-width="3.500"/>
<path d="M938,2153 C945,2143 952,2138.500 960,2138.500 C968,2138.500 975,2143 982,2153 C975,2163 968,2167.500 960,2167.500 C952,2167.500 945,2163 938,2153Z" fill="#3c3c3c"/>
<circle cx="960" cy="2153" r="10" fill="none" stroke="#f3f3f3" stroke-width="3.500"/>
<use href="#merge"/>
<use href="#merge" transform="translate(0 135)"/>
<use href="#merge" transform="translate(0 270)"/>
<use href="#merge" transform="translate(0 405)"/>
<use href="#merge" transform="translate(0 540)"/>

<!-- nav -->
<path d="M222,2307 V2349 M242,2307 V2349 M262,2307 V2349" stroke="#c4bfbd" stroke-width="4" stroke-linecap="round"/>
<rect x="523" y="2307" width="43" height="42" rx="13" fill="none" stroke="#c4bfbd" stroke-width="4.500"/>
<path d="M859,2307 L836,2328 L859,2350" fill="none" stroke="#c4bfbd" stroke-width="4" stroke-linecap="round" stroke-linejoin="round"/>
<circle cx="1019" cy="2311" r="6.500" fill="#bdb8b6"/>
<path d="M1000,2323 H1038 M1014,2323 V2334 L1007,2352 M1024,2323 V2334 L1031,2352 M1014,2330 H1024" fill="none" stroke="#bdb8b6" stroke-width="5.500" stroke-linecap="round" stroke-linejoin="round"/>
<rect x="1014" y="2323" width="10" height="14" fill="#bdb8b6"/>
</svg>
</body></html>
